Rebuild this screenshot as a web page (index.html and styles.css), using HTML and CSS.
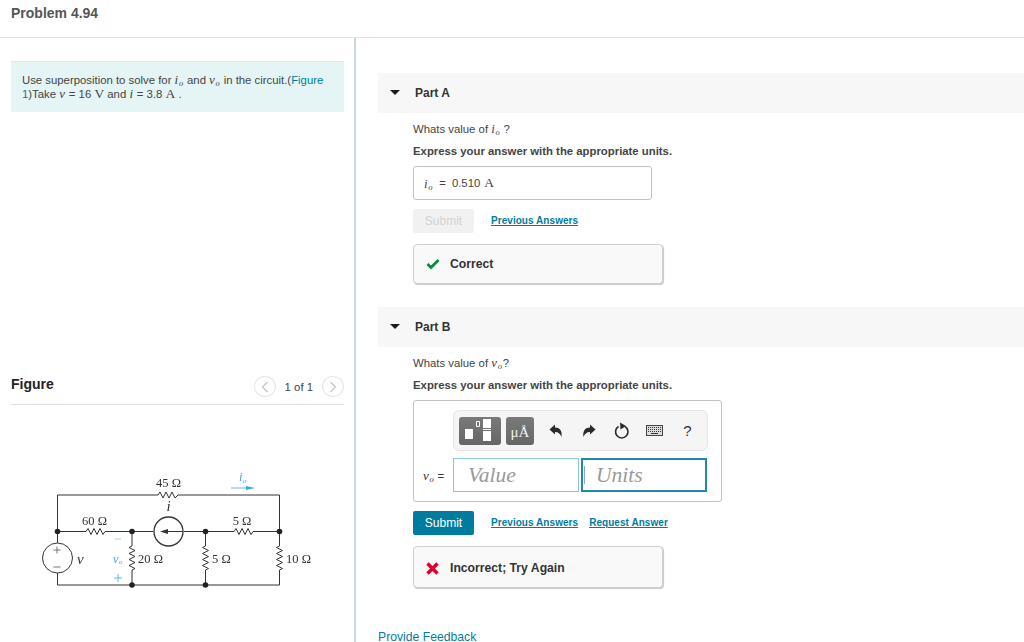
FILE: index.html
```html
<!DOCTYPE html>
<html lang="en">
<head>
<meta charset="utf-8">
<title>Problem 4.94</title>
<link rel="stylesheet" href="styles.css">
</head>
<body>
<header class="top"><h1 class="title">Problem 4.94</h1></header>
<div class="columns">
  <aside class="left">
    <div class="intro">Use superposition to solve for <i class="m">i<sub>o</sub></i> and <i class="m">v<sub>o</sub></i> in the circuit.(<a class="link">Figure 1</a>)Take <i class="m">v</i> = 16 <span class="r">V</span> and <i class="m">i</i> = 3.8 <span class="r">A</span> .</div>
    <div class="fighead">
      <h2 class="figtitle">Figure</h2>
      <div class="pager">
        <span class="pagebtn"><svg width="8" height="12" viewBox="0 0 8 12"><path d="M6.500 1 L1.500 6 L6.500 11" fill="none" stroke="#c4c8cc" stroke-width="1.300"/></svg></span>
        <span class="pagetxt">1 of 1</span>
        <span class="pagebtn"><svg width="8" height="12" viewBox="0 0 8 12"><path d="M1.500 1 L6.500 6 L1.500 11" fill="none" stroke="#c4c8cc" stroke-width="1.300"/></svg></span>
      </div>
    </div>
    <svg class="circuit" width="354" height="135" viewBox="0 465 354 135">
      <g fill="none" stroke="#333" stroke-width="1">
        <path d="M57.500 543V495H158M178 495H279.500V546M279.500 570V585H57.500V573"/>
        <path d="M57.500 531.500H86M105 531.500H153M184 531.500H234M253 531.500H279.500"/>
        <path d="M132 531.500V546M132 570V585M205.500 531.500V546M205.500 570V585"/>
        <path d="M158 495l2-3 3 6 3-6 3 6 3-6 3 6 3-3M86 531.500l2-3 3 6 3-6 3 6 3-6 3 6 2-3M234 531.500l2-3 3 6 3-6 3 6 3-6 3 6 2-3"/>
        <path d="M132 546l-3 1.500 6 3-6 3 6 3-6 3 6 3-6 3 6 3-3 1.500M205.500 546l-3 1.500 6 3-6 3 6 3-6 3 6 3-6 3 6 3-3 1.500M279.500 546l-3 1.500 6 3-6 3 6 3-6 3 6 3-6 3 6 3-3 1.500"/>
        <circle cx="57.500" cy="558" r="15"/>
        <circle cx="168.500" cy="531.500" r="14.500" stroke-width="1.300"/>
        <path d="M163 531.500H183"/>
        <path d="M53.500 550h7M57 546.500v7M53.500 567h7" stroke="#777"/>
      </g>
      <path d="M160 531.500l8-2.500v5z" fill="#333"/>
      <g fill="#222">
        <circle cx="57.500" cy="531.500" r="2.800"/><circle cx="132" cy="531.500" r="2.800"/><circle cx="205.500" cy="531.500" r="2.800"/><circle cx="279.500" cy="531.500" r="2.800"/><circle cx="132" cy="585" r="2.800"/><circle cx="205.500" cy="585" r="2.800"/>
      </g>
      <g fill="none" stroke="#5bbde0">
        <path d="M231 488H248"/><path d="M115 539h6" opacity=".6"/><path d="M114 578h8M118 574v8"/>
      </g>
      <path d="M246 486l9 2-9 2z" fill="#2eaee0"/>
      <g class="ctext">
        <text x="168.500" y="487" text-anchor="middle">45 Ω</text>
        <text x="94.500" y="525" text-anchor="middle">60 Ω</text>
        <text x="242" y="525" text-anchor="middle">5 Ω</text>
        <text x="138" y="563">20 Ω</text>
        <text x="212" y="563">5 Ω</text>
        <text x="286" y="563">10 Ω</text>
        <text class="cbig" x="168.500" y="511" text-anchor="middle" font-style="italic">i</text>
        <text class="cbig" x="77" y="564" font-style="italic">v</text>
        <text class="cblue" x="113" y="563" font-style="italic">v</text>
        <text class="cblue csub" x="119" y="564" font-style="italic">o</text>
        <text class="cblue" x="239" y="481" font-style="italic">i</text>
        <text class="cblue csub" x="243" y="483" font-style="italic">o</text>
      </g>
    </svg>
  </aside>
  <main class="right">
    <section class="part">
      <div class="parthead"><span class="caret"></span><span class="partname">Part A</span></div>
      <div class="body">
        <p class="q">Whats value of <i class="m">i<sub>o</sub></i> ?</p>
        <p class="express">Express your answer with the appropriate units.</p>
        <div class="answer"><i class="m">i<sub>o</sub></i> <span class="eq">=</span> 0.510 <span class="r">A</span></div>
        <div class="actions">
          <span class="btn off">Submit</span>
          <a class="alink">Previous Answers</a>
        </div>
        <div class="result">
          <svg class="resicon" width="14" height="12" viewBox="0 0 14 12"><path d="M1.500 6 L5 9.500 L12.500 2" fill="none" stroke="#0a8a3c" stroke-width="2.800"/></svg>
          <span>Correct</span>
        </div>
      </div>
    </section>
    <section class="part partb">
      <div class="parthead"><span class="caret"></span><span class="partname">Part B</span></div>
      <div class="body">
        <p class="q">Whats value of <i class="m">v<sub>o</sub></i>?</p>
        <p class="express">Express your answer with the appropriate units.</p>
        <div class="editor">
          <div class="toolbar">
            <span class="tool wide">
              <svg width="42" height="28" viewBox="0 0 42 28"><path fill="#fff" d="M6 12h8v10H6zM24 2h8v9h-8zM24 12h8v1h-8zM24 14h8v10h-8z"/><path fill="none" stroke="#fff" d="M17.500 4.500h3v5h-3z"/></svg>
            </span>
            <span class="tool mu">μÅ</span>
            <span class="ico first"><svg width="14" height="14" viewBox="0 0 14 14"><path fill="#2b2b2b" d="M.5 5.500L6 .5V3.500C10.500 3.500 13.500 6.500 12.500 13C11.500 10 9.500 8 6 8V10.500z"/></svg></span>
            <span class="ico"><svg width="14" height="14" viewBox="0 0 14 14"><path fill="#2b2b2b" d="M13.500 5.500L8 .5V3.500C3.500 3.500 .5 6.500 1.500 13C2.500 10 4.500 8 8 8V10.500z"/></svg></span>
            <span class="ico"><svg width="16" height="17" viewBox="0 0 16 17"><path fill="none" stroke="#2b2b2b" stroke-width="1.600" d="M11 4.500A6.200 6.200 0 1 1 4.500 4.500"/><path fill="#2b2b2b" d="M6 .5L12 4L6.500 7.500z"/></svg></span>
            <span class="ico"><svg width="17" height="11" viewBox="0 0 17 11"><rect x=".5" y=".5" width="16" height="10" fill="#ddd" stroke="#444"/><path stroke="#333" stroke-dasharray="1 1" d="M2 2.500h13M2 4.500h13M2 6.500h13"/><path stroke="#333" d="M5 8.500h7"/></svg></span>
            <span class="ico qm">?</span>
          </div>
          <div class="inputrow">
            <span class="vlabel"><i class="m">v<sub>o</sub></i> =</span>
            <span class="field value">Value</span>
            <span class="field units"><span class="cursor"></span>Units</span>
          </div>
        </div>
        <div class="actions second">
          <span class="btn">Submit</span>
          <a class="alink">Previous Answers</a>
          <a class="alink">Request Answer</a>
        </div>
        <div class="result bad">
          <svg class="resicon" width="13" height="13" viewBox="0 0 13 13"><path d="M1.500 1.500 L11.500 11.500M11.500 1.500 L1.500 11.500" fill="none" stroke="#e0002a" stroke-width="3.400"/></svg>
          <span>Incorrect; Try Again</span>
        </div>
      </div>
    </section>
    <a class="feedback">Provide Feedback</a>
  </main>
</div>
</body>
</html>
```

FILE: styles.css
```css
* { box-sizing: border-box; }
html, body { margin: 0; padding: 0; height: 642px; overflow: hidden; background: #fff; }
body { font-family: "Liberation Sans", Arial, sans-serif; font-size: 11.35px; color: #333; }
.top { height: 38px; border-bottom: 1px solid #dfe2e5; padding: 6px 11px 0; }
.title { margin: 0; font-size: 14px; line-height: 15px; font-weight: bold; color: #555; }
.columns { display: flex; height: 604px; }
.left { width: 356px; flex: none; border-right: 2px solid #c9d6e2; padding: 23px 11px 0; }
.intro { width: 333px; height: 51px; background: #e5f5f6; border-top: 1px solid #dcecee; padding: 11px 11px 0; line-height: 14px; color: #444; }
.link { color: #007c9e; }
.m { font-family: "Liberation Serif", serif; font-style: italic; font-size: 13px; letter-spacing: .7px; line-height: 1; }
.m sub { font-size: 8.500px; line-height: 0; vertical-align: -1.500px; }
.r { font-family: "Liberation Serif", serif; font-size: 13.500px; line-height: 1; }
.fighead { width: 333px; height: 39px; margin-top: 254px; border-bottom: 1px solid #dcdfe2; display: flex; justify-content: space-between; align-items: flex-start; padding-top: 10px; }
.figtitle { margin: 1px 0 0; font-size: 14px; line-height: 15px; font-weight: bold; color: #222; }
.pager { display: flex; align-items: center; gap: 9px; }
.pagebtn { width: 22px; height: 21px; border: 1px solid #e3e5e7; border-radius: 50%; display: flex; align-items: center; justify-content: center; }
.pagetxt { font-size: 11.35px; color: #444; }
.circuit { display: block; margin: 60px 0 0 -11px; filter: blur(.35px); }
.ctext { font-family: "Liberation Serif", serif; font-size: 12.500px; fill: #333; }
.cbig { font-size: 15px; }
.cblue { fill: #4aa8cc; }
.csub { font-size: 7px; }
.right { flex: 1; min-width: 0; padding: 35px 0 0 22px; }
.part { display: block; }
.partb { margin-top: 23px; }
.parthead { height: 40px; background: #f7f7f7; display: flex; align-items: center; padding-left: 12px; }
.caret { width: 0; height: 0; border-left: 5px solid transparent; border-right: 5px solid transparent; border-top: 5.500px solid #1c1c1c; margin-right: 15px; margin-top: -1px; }
.partname { font-size: 12px; font-weight: bold; color: #333; }
.body { padding: 9px 0 0 35px; }
.q { margin: 0; height: 14px; line-height: 14px; color: #444; }
.express { margin: 8px 0 0; line-height: 14px; font-weight: bold; color: #444; }
.answer { width: 239px; height: 34px; margin: 8px 0 0; border: 1px solid #c2c2c2; border-radius: 3px; padding: 0 10px; display: flex; align-items: center; gap: 4px; color: #444; }
.eq { margin: 0 2px; }
.actions { display: flex; align-items: center; gap: 17px; margin-top: 9px; height: 24px; }
.btn { width: 61px; height: 24px; background: #007c9e; color: #fff; border-radius: 2px; display: flex; align-items: center; justify-content: center; font-size: 12px; }
.btn.off { background: #f1f1f1; color: #d3d3d3; }
.alink { color: #007c9e; font-weight: bold; font-size: 10px; letter-spacing: .05px; text-decoration: underline; margin-top: -2px; }
.second .alink + .alink { margin-left: -6px; }
.result { width: 250px; height: 40px; margin: 11px 0 0; background: #f9f9f9; border: 1px solid #cfcfcf; border-radius: 4px; box-shadow: 1px 1px 1px #c8c8c8; display: flex; align-items: center; padding-left: 12px; gap: 10px; font-size: 12.200px; font-weight: bold; color: #333; }
.result.bad { height: 42px; gap: 11px; padding-top: 2px; }
.editor { width: 309px; height: 102px; margin: 8px 0 0; border: 1px solid #c2c2c2; border-radius: 3px; padding: 9px 14px 0 39px; }
.toolbar { width: 255px; height: 41px; background: #f5f5f5; border: 1px solid #e5e5e5; border-radius: 6px; display: flex; align-items: center; padding-left: 5px; }
.tool { height: 28px; background: linear-gradient(#7a7a7a, #666); border-radius: 3px; display: flex; align-items: center; justify-content: center; color: #f2f2f2; }
.tool.wide { width: 42px; }
.tool.mu { width: 28px; margin-left: 5px; padding-top: 3px; font-family: "Liberation Serif", serif; font-size: 15px; }
.ico { width: 33px; display: flex; justify-content: center; align-items: center; }
.ico.first { margin-left: 5px; }
.qm { font-size: 15px; color: #333; }
.inputrow { display: flex; align-items: center; margin: 7px 0 0 -30px; }
.vlabel { width: 30px; font-size: 11.35px; color: #333; }
.field { height: 34px; display: flex; align-items: center; font-family: "Liberation Serif", serif; font-style: italic; font-size: 21.500px; color: #999; }
.value { width: 126px; border: 1px solid #8cc6d6; padding-left: 14px; }
.units { width: 126px; margin-left: 2px; border: 2px solid #1f8aa8; padding-left: 1px; }
.cursor { width: 1px; height: 18px; background: #8fa5d8; margin-right: 11px; }
.second { margin-top: 9px; }
.feedback { display: block; margin-top: 42px; font-size: 12.200px; line-height: 14px; color: #007c9e; }
```
